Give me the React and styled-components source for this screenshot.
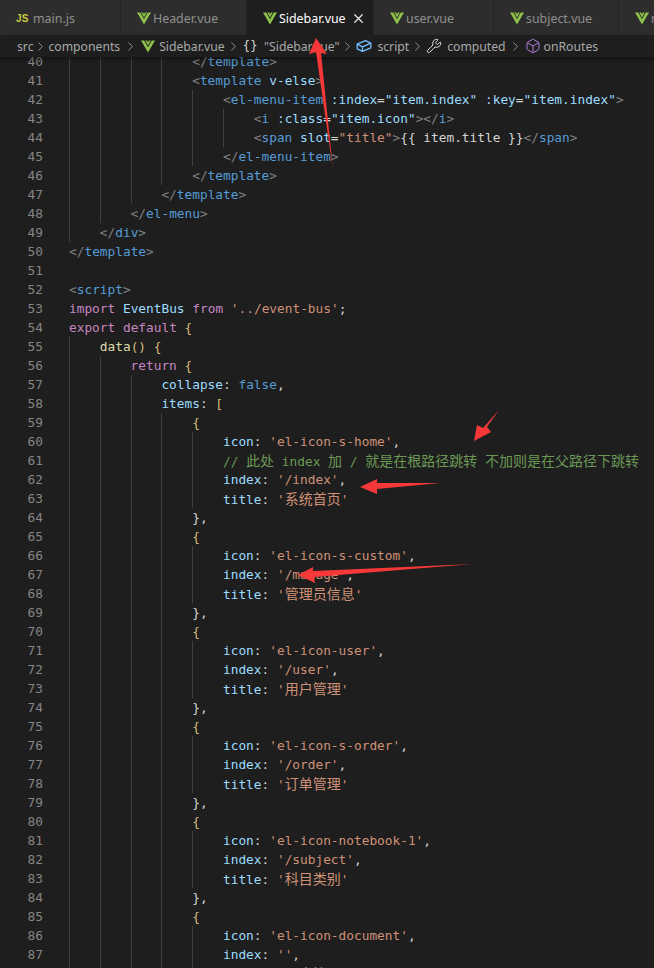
import React from 'react';
import styled, { createGlobalStyle } from 'styled-components';
import { Wrench, Box, X, ChevronRight } from 'lucide-react';

const Global = createGlobalStyle`
  html, body { margin: 0; padding: 0; background: #1e1e1e; overflow: hidden; }
  * { box-sizing: border-box; }
`;

const Page = styled.div`
  position: relative;
  width: 654px;
  height: 968px;
  overflow: hidden;
  background: #1e1e1e;
  display: flex;
  flex-direction: column;
  font-family: "Noto Sans", "Open Sans", sans-serif;
`;

const TabBar = styled.div`
  display: flex;
  flex: none;
  height: 35px;
  background: #252526;
  overflow: hidden;
`;

const Tab = styled.div`
  flex: none;
  width: ${p => p.$w}px;
  height: 35px;
  display: flex;
  align-items: center;
  gap: ${p => p.$gap ?? 4}px;
  padding: 1px 0 0 16px;
  background: ${p => (p.$active ? '#1e1e1e' : '#2d2d2d')};
  border-right: 1px solid #252526;
  color: ${p => (p.$active ? '#ffffff' : '#8f8f8f')};
  font-size: 12.4px;
  white-space: nowrap;
`;

const JsIcon = styled.span`
  color: #cbcb41;
  font-family: "Liberation Sans", sans-serif;
  font-weight: 700;
  font-size: 10px;
  width: 12px;
  letter-spacing: 0.3px;
`;

const CloseSlot = styled.span`
  display: flex;
  margin-left: 3px;
  color: #e8e8e8;
`;

const Crumbs = styled.div`
  position: relative;
  z-index: 2;
  flex: none;
  height: 22px;
  display: flex;
  align-items: center;
  padding-left: 17px;
  background: #1e1e1e;
  box-shadow: 0 2px 4px rgba(0, 0, 0, 0.45);
  color: #a9a9a9;
  font-size: 12.2px;
  white-space: nowrap;
`;

const Sep = styled.span`
  display: flex;
  margin: 0 ${p => p.$m ?? 1}px;
  color: #a6a6a6;
`;

const CrumbIcon = styled.span`
  display: flex;
  align-items: center;
  margin-right: ${p => p.$m ?? 4}px;
  color: ${p => p.$c || '#d4d4d4'};
`;

const Braces = styled.span`
  font-family: "DejaVu Sans Mono", monospace;
  font-size: 12px;
  color: #d4d4d4;
  margin-right: 6px;
  letter-spacing: 0.5px;
`;

const Editor = styled.div`
  flex: 1;
  margin-top: -5px;
  overflow: hidden;
  font-family: "DejaVu Sans Mono", "Noto Sans CJK SC", monospace;
  font-size: 12.8px;
`;

const Row = styled.div`
  display: flex;
  height: 19px;
  line-height: 19px;
  white-space: pre;
`;

const LineNo = styled.div`
  flex: none;
  width: 69px;
  padding-right: 26px;
  text-align: right;
  color: #858585;
`;

const Guide = styled.span`
  flex: none;
  width: 30.8px;
  height: 19px;
  border-left: 1px solid #404040;
`;

const colors = {
  b: '#808080',
  t: '#569cd6',
  a: '#9cdcfe',
  s: '#ce9178',
  p: '#d4d4d4',
  k: '#c586c0',
  f: '#dcdcaa',
  y: '#d7ba7d',
  c: '#6a9955',
  v: '#569cd6',
};

const Tok = styled.span`
  color: ${p => colors[p.$k]};
`;

const Cjk = styled.span`
  font-family: "Noto Sans CJK SC", sans-serif;
  font-size: 14px;
`;

const Overlay = styled.svg`
  position: absolute;
  left: 0;
  top: 0;
  z-index: 5;
  pointer-events: none;
`;

const Green = '#8dc149';
const VueIcon = () => (
  <svg width="14" height="13" viewBox="0 0 14 13">
    <path fill={Green} d="M0 0.5h3.2L7 7.2 10.8 0.5H14L7 12.5z" />
    <path fill={Green} d="M4.2 0.5h1.9L7 2.2 7.9 0.5h1.9L7 5.6z" />
  </svg>
);

const ModuleIcon = () => (
  <svg width="16" height="16" viewBox="0 0 16 16" fill="none" stroke="#75beff" strokeWidth="1.3" strokeLinejoin="round">
    <path d="M1.2 6.2 9.5 2.6l5.3 2.6v4.6l-8.3 3.6-5.3-2.6z" />
    <path d="M1.2 6.2l5.3 2.6 8.3-3.6M6.5 8.8v4.6" />
  </svg>
);

const Text = ({ children }) => {
  const parts = children.split(/([\u4e00-\u9fff]+)/);
  return parts.map((x, i) => (i % 2 ? <Cjk key={i}>{x}</Cjk> : x));
};

const item = (icon, index, title) => [
  [4, [['y', '{']]],
  [5, [['a', 'icon'], ['p', ': '], ['s', `'${icon}'`], ['p', ',']]],
  [5, [['a', 'index'], ['p', ': '], ['s', `'${index}'`], ['p', ',']]],
  [5, [['a', 'title'], ['p', ': '], ['s', `'${title}'`]]],
  [4, [['p', '},']]],
];

const open = name => [['b', '<'], ['t', name], ['b', '>']];
const close = name => [['b', '</'], ['t', name], ['b', '>']];

const home = item('el-icon-s-home', '/index', '系统首页');
const lines = [
  [4, close('template')],
  [4, [['b', '<'], ['t', 'template'], ['a', ' v-else'], ['b', '>']]],
  [5, [['b', '<'], ['t', 'el-menu-item'], ['a', ' :index'], ['p', '='], ['a', '"item.index"'], ['a', ' :key'], ['p', '='], ['a', '"item.index"'], ['b', '>']]],
  [6, [['b', '<'], ['t', 'i'], ['a', ' :class'], ['p', '='], ['a', '"item.icon"'], ['b', '></'], ['t', 'i'], ['b', '>']]],
  [6, [['b', '<'], ['t', 'span'], ['a', ' slot'], ['p', '='], ['s', '"title"'], ['b', '>'], ['p', '{{ item.title }}'], ['b', '</'], ['t', 'span'], ['b', '>']]],
  [5, close('el-menu-item')],
  [4, close('template')],
  [3, close('template')],
  [2, close('el-menu')],
  [1, close('div')],
  [0, close('template')],
  [0, []],
  [0, open('script')],
  [0, [['k', 'import'], ['a', ' EventBus '], ['k', 'from'], ['p', ' '], ['s', "'../event-bus'"], ['p', ';']]],
  [0, [['k', 'export default'], ['p', ' '], ['y', '{']]],
  [1, [['f', 'data'], ['y', '()'], ['p', ' '], ['y', '{']]],
  [2, [['k', 'return'], ['p', ' '], ['y', '{']]],
  [3, [['a', 'collapse'], ['p', ': '], ['v', 'false'], ['p', ',']]],
  [3, [['a', 'items'], ['p', ': '], ['y', '[']]],
  home[0],
  home[1],
  [5, [['c', '// 此处 index 加 / 就是在根路径跳转 不加则是在父路径下跳转']]],
  ...home.slice(2),
  ...item('el-icon-s-custom', '/manage', '管理员信息'),
  ...item('el-icon-user', '/user', '用户管理'),
  ...item('el-icon-s-order', '/order', '订单管理'),
  ...item('el-icon-notebook-1', '/subject', '科目类别'),
  [4, [['y', '{']]],
  [5, [['a', 'icon'], ['p', ': '], ['s', "'el-icon-document'"], ['p', ',']]],
  [5, [['a', 'index'], ['p', ': '], ['s', "''"], ['p', ',']]],
  [5, [['a', 'title'], ['p', ': '], ['s', "'日志管理'"]]],
];

const arrows = [
  '316,38 327,54 321,53 333,170 316,52 309,54',
  '499,410 487,427 491,432 474,441 477,425 483,428',
  '440,483 377,489 377,494 360,487 377,479 377,483',
  '473,564 314,577 315,583 298,575 313,567 313,571',
];

const tabs = [
  { name: 'main.js', w: 121, js: true },
  { name: 'Header.vue', w: 126 },
  { name: 'Sidebar.vue', w: 127, active: true },
  { name: 'user.vue', w: 120 },
  { name: 'subject.vue', w: 125 },
  { name: 'manage.vue', w: 125 },
];

const Chevron = ({ m }) => (
  <Sep $m={m}><ChevronRight size={15} strokeWidth={1.3} /></Sep>
);

export default function App() {
  return (
    <Page>
      <Global />
      <TabBar>
        {tabs.map(t => (
          <Tab key={t.name} $w={t.w} $active={t.active} $gap={t.js ? 5 : 2}>
            {t.js ? <JsIcon>JS</JsIcon> : <VueIcon />}
            <span>{t.name}</span>
            {t.active && <CloseSlot><X size={15} strokeWidth={2} /></CloseSlot>}
          </Tab>
        ))}
      </TabBar>
      <Crumbs>
        <span>src</span>
        <Chevron m={0} />
        <span>components</span>
        <Chevron m={3} />
        <CrumbIcon $m={4}><VueIcon /></CrumbIcon>
        <span>Sidebar.vue</span>
        <Chevron m={1.5} />
        <Braces>{'{}'}</Braces>
        <span>"Sidebar.vue"</span>
        <Chevron m={1} />
        <CrumbIcon $m={5}><ModuleIcon /></CrumbIcon>
        <span>script</span>
        <Chevron m={1} />
        <CrumbIcon $c="#dddddd" $m={5}><Wrench size={16} strokeWidth={1.5} /></CrumbIcon>
        <span>computed</span>
        <Chevron m={2} />
        <CrumbIcon $c="#b180d7" $m={3}><Box size={16} strokeWidth={1.5} /></CrumbIcon>
        <span>onRoutes</span>
      </Crumbs>
      <Editor>
        {lines.map(([level, toks], i) => (
          <Row key={i}>
            <LineNo>{40 + i}</LineNo>
            {Array.from({ length: level }, (_, g) => <Guide key={g} />)}
            <span>
              {toks.map(([k, text], j) => (
                <Tok key={j} $k={k}><Text>{text}</Text></Tok>
              ))}
            </span>
          </Row>
        ))}
      </Editor>
      <Overlay width="654" height="968" viewBox="0 0 654 968">
        {arrows.map(a => <polygon key={a} points={a} fill="#f63838" />)}
      </Overlay>
    </Page>
  );
}
